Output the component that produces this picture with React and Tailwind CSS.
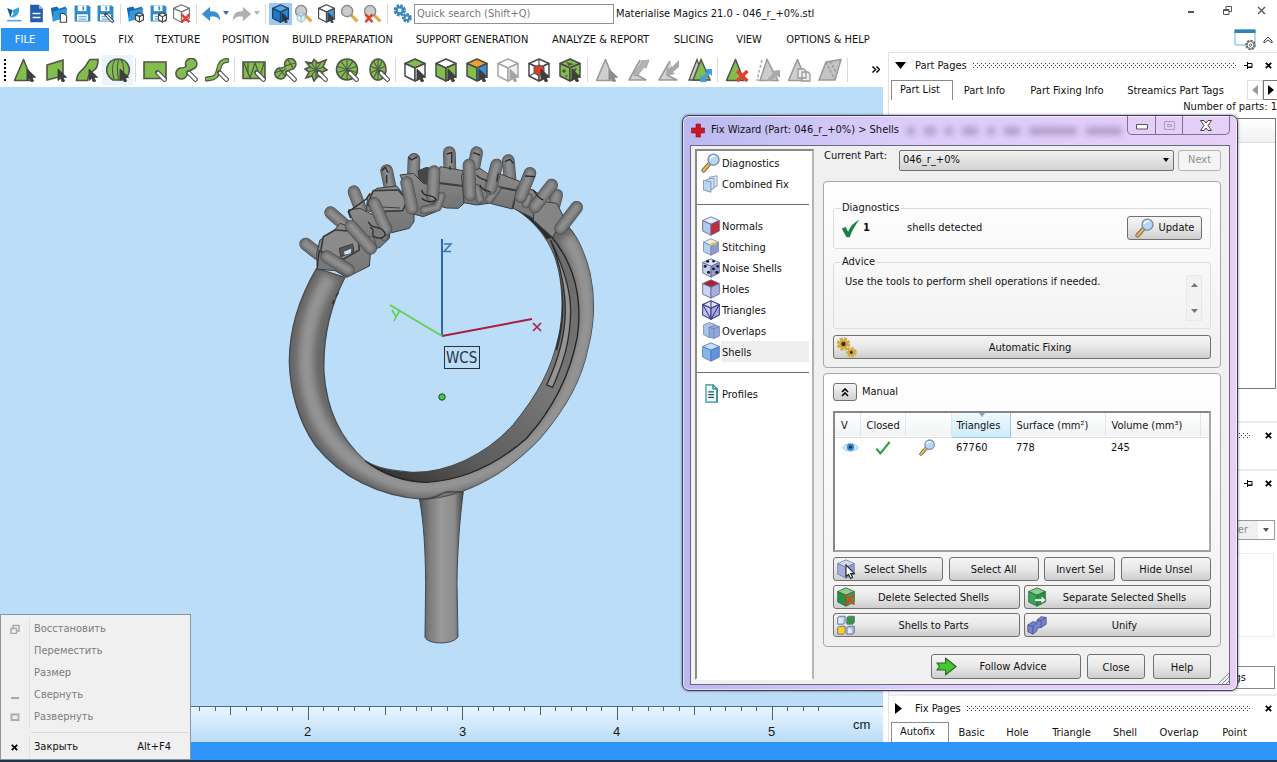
import React from "react";

/* ---------- shared icon pieces ---------- */

const Svg = ({ size = 24, children, className = "" }) => (
  <svg viewBox="0 0 24 24" width={size} height={size} className={className} fill="none" aria-hidden="true">
    {children}
  </svg>
);

const CubeFaces = ({ top, left, right, stroke = "#4a4a4a", w = 1.5 }) => (
  <g stroke={stroke} strokeWidth={w} strokeLinejoin="round">
    <path d="M12 1 22 5.5 12 10 2 5.5Z" fill={top} />
    <path d="M2 5.5 12 10V23L2 18Z" fill={left} />
    <path d="M12 10 22 5.5V18L12 23Z" fill={right} />
  </g>
);

const Cursor = ({ fill = "#3f3f3f" }) => (
  <path d="M14 11V22.5L16.6 20.2 18.4 24 20.6 23 18.8 19.3H22.6Z" fill={fill} stroke={fill} strokeWidth="1" />
);

const Pen = () => (
  <g strokeLinecap="round">
    <path d="M14.5 14.5 21.5 21.5" stroke="#4a4a4a" strokeWidth="4.6" />
    <path d="M15 15 21.5 21.5" stroke="#fff" strokeWidth="2.6" />
  </g>
);

const G = "#82bd4e";
const D = "#505548";

const Lens = ({ x = 9, y = 9, glass = "#c9cdd0", handle = "#e0a84a" }) => (
  <g>
    <path d={`M${x + 4} ${y + 4} ${x + 13} ${y + 13}`} stroke={handle} strokeWidth="4" />
    <circle cx={x} cy={y} r="7" fill={glass} stroke="#8b8b8b" strokeWidth="1.8" />
  </g>
);

const BlueLens = ({ size = 20 }) => (
  <Svg size={size}>
    <path d="M11 12 3 21" stroke="#7d6430" strokeWidth="5" strokeLinecap="round" />
    <path d="M11 12 3 21" stroke="#e0b968" strokeWidth="3" strokeLinecap="round" />
    <circle cx="15" cy="8" r="6.6" fill="#b5d9f5" stroke="#7f93ad" strokeWidth="1.8" />
    <path d="M11 7a4.5 4.5 0 0 1 6-3" stroke="#fff" strokeWidth="2" />
  </Svg>
);

const Tri = ({ fill = G, stroke = D }) => (
  <path d="M10.5 1.5 19 22.5H1.5Z" fill={fill} stroke={stroke} strokeWidth="1.6" strokeLinejoin="round" />
);

const spokes = [0, 36, 72, 108, 144, 180, 216, 252, 288, 324];
const Spokes = ({ rx, ry }) =>
  spokes.map((a) => (
    <path
      key={a}
      d={`M12 11.5 ${12 + rx * Math.sin((a * Math.PI) / 180)} ${11.5 - ry * Math.cos((a * Math.PI) / 180)}`}
      stroke={D}
      strokeWidth="1.1"
    />
  ));

const markIcons = [
  ["Mark triangle", <><Tri /><Cursor /></>],
  ["Mark plane", <><path d="M3 7 19 2V18L3 22Z" fill={G} stroke={D} strokeWidth="1.6" /><Cursor /></>],
  ["Mark surface", <><path d="M15 1.500H23C23 11 20 11 17 14 14 17 13 18 12.500 22.500H1.500C2 15 5 14 8 11 12 8 12 4 15 1.500Z" fill={G} stroke={D} strokeWidth="1.6" /><Cursor /></>],
  ["Mark shell", <><path d="M7 22C2 19 0 14 1 9 3 3 8 1 12 1S21 3 23 9C24 14 22 19 17 22Z" fill={G} stroke={D} strokeWidth="1.6" /><path d="M8 21C6 14 6 6 9 2M12.500 21C11 14 11 8 12.500 2M16 21C18 14 18 6 15 2" stroke={D} strokeWidth="1.1" /><Cursor /></>, true],
  null,
  ["Rectangle mark", <><path d="M1 4H23V20.500H1Z" fill={G} stroke={D} strokeWidth="1.6" /><Pen /></>],
  ["Brush mark", <><path d="M12 8A5.600 5.600 0 1 1 21 10C17 12 14 13 12.500 18A5.600 5.600 0 1 1 6 10C9 10 11 10 12 8Z" fill={G} stroke={D} strokeWidth="1.6" /><Pen /></>],
  ["Path mark", <><path d="M22 2.500C12 3 15 14 11 18 8 21 6 20 2 21" stroke={D} strokeWidth="5" strokeLinecap="round" /><path d="M22 2.500C12 3 15 14 11 18 8 21 6 20 2 21" stroke={G} strokeWidth="2.600" strokeLinecap="round" /><Pen /></>],
  null,
  ["Window triangles", <><path d="M1 4H23V20.500H1Z" fill={G} stroke={D} strokeWidth="1.6" /><path d="M2 5 8 20 13 5 18 18 22 5M6 4V16" stroke={D} strokeWidth="1.2" /><Pen /></>],
  ["Brush triangles", <><path d="M12 8A5.600 5.600 0 1 1 20 11C16 12 14 13 12.500 18A5.600 5.600 0 1 1 6 10C9 10 11 10 12 8Z" fill={G} stroke={D} strokeWidth="1.6" /><path d="M15 2 20 10M12 8 22 5M6 10 12 18M1 15 10 12M4 20 13 10" stroke={D} strokeWidth="1.1" /><Pen /></>],
  ["Star triangles", <><path d="M2 4 8 5 10 1.500 14 5 22 2 19 9 23 12 18 14 21 21 14 18 10 23 8 18 2 20 5 14 1 11 6 9Z" fill={G} stroke={D} strokeWidth="1.6" /><Spokes rx={8} ry={8} /><Pen /></>],
  ["Circle triangles", <><circle cx="12" cy="11.500" r="10.500" fill={G} stroke={D} strokeWidth="1.6" /><Spokes rx={10} ry={10} /><Pen /></>],
  ["Ellipse triangles", <><ellipse cx="12" cy="11.500" rx="8" ry="10.500" fill={G} stroke={D} strokeWidth="1.6" /><Spokes rx={7} ry={10} /><Pen /></>],
  null,
  ["Cube top", <><CubeFaces top={G} left="#fff" right="#fff" /><Cursor /></>],
  ["Cube sides", <><CubeFaces top="#fff" left={G} right={G} /><Cursor /></>],
  ["Cube colours", <><CubeFaces top="#f0a030" left={G} right="#3d8fd6" /><Cursor /></>],
  ["Cube clear", <><CubeFaces top="#fff" left="#fff" right="#f0f0f0" stroke="#a5a5a5" /><Cursor fill="#a5a5a5" /></>],
  ["Cube inner", <><CubeFaces top="#fff" left="#fff" right="#fff" /><path d="M2 18 12 13 22 18M12 1V13" stroke={D} strokeWidth="1.2" /><path d="M7 9 12 7 17 9V15L12 18 7 15Z" fill="#d8402c" stroke={D} /><Cursor /></>],
  ["Cube holes", <><CubeFaces top={G} left={G} right={G} /><path d="M8 4 16 6 11 8ZM15 11 19 10 17 14Z" fill={D} /><circle cx="6" cy="13" r="1.800" fill={D} /><circle cx="8.500" cy="18" r="1" fill={D} /><Cursor /></>],
  null,
  ["Grow selection", <><Tri fill="#cfcfcf" stroke="#9a9a9a" /><Cursor fill="#8c8c8c" /></>],
  ["Shrink selection", <><path d="M14 2 3 22H20L11 17 15 9" fill="#d2d2d2" stroke="#9a9a9a" strokeWidth="1.600" strokeLinejoin="round" /><path d="M23 2 15 3 15 6 9 14 8 18 12 17 18 9 20 10Z" fill="#b5b5b5" stroke="#999" strokeWidth=".8" /></>],
  ["Invert selection", <><path d="M13 3 2 22H20L10 17 15 9" fill="#d2d2d2" stroke="#9a9a9a" strokeWidth="1.600" strokeLinejoin="round" /><path d="M9 18 10 9 13 11 22 2V9L16 14 18 16Z" fill="#a8a8a8" /></>],
  ["Toggle visibility", <><path d="M9 1.500 1 22H16Z" fill="#c8c8c8" stroke={D} strokeWidth="1.300" /><path d="M13 1.500 5 22H22Z" fill={G} stroke={D} strokeWidth="1.500" /><path d="M17 11H24V18L22 16 17 21 19 24H12V17L14 19 19 14Z" fill="#439ee0" /></>],
  null,
  ["Delete marked", <><Tri /><path d="M12 13 22.500 23M22.500 13 12 23" stroke="#df4030" strokeWidth="3.400" /></>],
  ["Hide marked", <><path d="M6 2 1 22H14" stroke="#aaa" strokeWidth="1.500" strokeDasharray="3 2" /><path d="M11 1.500 4 22.500H22Z" fill="#ccc" stroke="#999" strokeWidth="1.500" /><path d="M10 23 17 15 15 13 24 12V20L21 18 15 23Z" fill="#aaa" /></>],
  ["Copy marked", <><Tri fill="#cfcfcf" stroke="#9a9a9a" /><path d="M11 11H17L19 13V20H11ZM15 14H21L23 16V23H15Z" fill="#eee" stroke="#999" strokeWidth="1.300" /></>],
  ["Separate marked", <><path d="M8 4 23 1.500 17 22H1Z" fill="#c4c4c4" stroke="#999" strokeWidth="1.500" /><path d="M8 4 17 22M12 3 19 16" stroke="#999" strokeWidth="1.400" strokeDasharray="3 1.500" /></>],
  null,
];

const Folder = ({ children }) => (
  <Svg size={19}>
    <path d="M1 5 9 3 11 6 20 3 21 13 4 22Z" fill="#1c6aa8" />
    <path d="M5 9 22 5 19 18 3 22Z" fill="#3198e2" />
    {children}
  </Svg>
);
const Disk = ({ children }) => (
  <Svg size={19}>
    <path d="M2 2H20L22 4V22H2Z" fill="#2b8bcb" />
    <path d="M6 2H17V9H6Z" fill="#fff" />
    <path d="M13 3V8" stroke="#2b8bcb" strokeWidth="2" />
    <path d="M5 13H19V21H5Z" fill="#fff" />
    <path d="M7 16H17M7 19H17" stroke="#7ab1d8" strokeWidth="1.500" />
    {children}
  </Svg>
);
const MiniCube = () => (
  <path d="M17 11 22 13.500V20L17 23 12 20V13.500ZM12 13.500 17 16 22 13.500M17 16V23" fill="#fff" stroke="#444" strokeWidth="1.400" />
);

const quickIcons = [
  ["Materialise", <Svg size={19}><path d="M4 5 11 8 8 17Z" fill="#1c5a91" /><path d="M11 8 19 4C20 13 15 17 8 17L12 13Z" fill="#32a5d7" /><path d="M4 21H22" stroke="#42aedb" strokeWidth="2" /></Svg>],
  ["New", <Svg size={19}><path d="M4 1H15L20 6V23H4Z" fill="#1e5fae" /><path d="M15 1V6H20" fill="#93bdea" /><path d="M7 12H17M7 17H17" stroke="#fff" strokeWidth="1.700" /></Svg>],
  ["Open", <Folder><path d="M13 12H18L21 15V23H13Z" fill="#fff" stroke="#444" strokeWidth="1.400" /></Folder>],
  ["Save", <Disk />],
  ["Save as", <Disk><path d="M11 12 22 23" stroke="#444" strokeWidth="4" /><path d="M13 14 21 22" stroke="#fff" strokeWidth="1.700" /></Disk>],
  null,
  ["Load project", <Folder><MiniCube /></Folder>],
  ["Save project", <Disk><MiniCube /></Disk>],
  ["Unload", <Svg size={19}><CubeFaces top="#fff" left="#fff" right="#fff" stroke="#777" /><path d="M12 13 22 23M22 13 12 23" stroke="#e04038" strokeWidth="3.200" /></Svg>],
  null,
];
const viewIcons = [
  ["Select part", <Svg size={19}><CubeFaces top="#50a5e9" left="#2376c4" right="#2b84d4" stroke="#24415e" /><Cursor fill="#273748" /></Svg>, true],
  ["Zoom part", <Svg size={19}><Lens /><path d="M4 13 9 11 14 13V20L9 23 4 20ZM4 13 9 16 14 13M9 16V23" fill="#dff0fb" stroke="#7db4d6" /></Svg>],
  ["Select face", <Svg size={19}><CubeFaces top="#fff" left="#fff" right="#3d9be6" /><Cursor /></Svg>],
  ["Zoom", <Svg size={19}><Lens /></Svg>],
  ["Unzoom", <Svg size={19}><Lens /><path d="M3 13 12 23M12 13 3 23" stroke="#d9432f" strokeWidth="3.200" /></Svg>],
  null,
];

const Gears = ({ size = 19, color = "#3987bd", hub = "#fff" }) => (
  <Svg size={size}>
    <circle cx="8.500" cy="8" r="5.500" stroke={color} strokeWidth="4.500" strokeDasharray="3 1.300" />
    <circle cx="8.500" cy="8" r="4" stroke={color} strokeWidth="3" fill={hub} />
    <circle cx="17.500" cy="17.500" r="4.200" stroke={color} strokeWidth="4" strokeDasharray="2.600 1.200" />
    <circle cx="17.500" cy="17.500" r="3" stroke={color} strokeWidth="2.400" fill={hub} />
  </Svg>
);

const Divider = () => <span className="mx-[3px] h-5 w-px shrink-0 bg-[#d9d9d9]" />;
const Caret = ({ color }) => (
  <svg width="8" height="5" viewBox="0 0 8 5" aria-hidden="true"><path d="M1 0H7L4 4Z" fill={color} /></svg>
);

function QuickRow({ items }) {
  return items.map((it, i) =>
    it ? (
      <button key={i} aria-label={it[0]} className={it[2] ? "flex h-[22px] w-[23px] items-center justify-center bg-[#9ccaf2]" : "flex h-[22px] w-[23px] items-center justify-center"}>
        {it[1]}
      </button>
    ) : (
      <Divider key={i} />
    )
  );
}

function TitleBar() {
  return (
    <header className="flex h-[26px] shrink-0 items-center pl-[2px] pt-px">
      <QuickRow items={quickIcons} />
      <button aria-label="Undo" className="flex w-[31px] items-center">
        <Svg size={22}><path d="M2 12 11 4V9C19 8 22 13 22 19 19 15 17 14 11 15V20Z" fill="#3a8fcf" /></Svg>
        <Caret color="#3a6fa0" />
      </button>
      <button aria-label="Redo" className="flex w-[31px] items-center">
        <Svg size={22}><path d="M22 12 13 4V9C5 8 2 13 2 19 5 15 7 14 13 15V20Z" fill="#b0b0b0" /></Svg>
        <Caret color="#a8b6c2" />
      </button>
      <Divider />
      <QuickRow items={viewIcons} />
      <span className="flex w-[23px] justify-center"><Gears /></span>
      <input aria-label="Quick search" placeholder="Quick search (Shift+Q)" className="h-5 w-[200px] border border-[#909090] bg-white px-[2px] text-[11px] placeholder:text-[#777]" />
      <h1 className="ml-[2px] whitespace-nowrap text-[11px]">Materialise Magics 21.0 - 046_r_+0%.stl</h1>
      <div className="ml-auto flex items-center self-start pt-px">
        <button aria-label="Minimize" className="flex h-4 w-9 items-center justify-center"><svg width="8" height="8" viewBox="0 0 8 8"><path d="M1 6H7" stroke="#555" strokeWidth="2" /></svg></button>
        <button aria-label="Restore" className="flex h-4 w-9 items-center justify-center"><svg width="9" height="9" viewBox="0 0 9 9" fill="none" stroke="#555"><path d="M.5 3.500H6V8.500H.5ZM.5 4.500H6M3 3V.5H8.500V5.500H6" /></svg></button>
        <button aria-label="Close window" className="flex h-4 w-8 items-center justify-center"><svg width="9" height="9" viewBox="0 0 9 9"><path d="M1 1 8 8M8 1 1 8" stroke="#555" strokeWidth="1.300" /></svg></button>
      </div>
    </header>
  );
}

const menu = [
  ["TOOLS", "w-[55px]"],
  ["FIX", "w-[38px]"],
  ["TEXTURE", "w-[65px]"],
  ["POSITION", "w-[71px]"],
  ["BUILD PREPARATION", "w-[123px]"],
  ["SUPPORT GENERATION", "w-[136px]"],
  ["ANALYZE & REPORT", "w-[121px]"],
  ["SLICING", "w-[65px]"],
  ["VIEW", "w-[46px]"],
  ["OPTIONS & HELP", "w-[112px]"],
];

function MenuBar() {
  return (
    <nav className="flex h-[26px] shrink-0 items-center pl-px pt-px">
      <button className="mr-[3px] h-[23px] w-12 bg-[#2d93f0] text-white">FILE</button>
      {menu.map(([t, w]) => (
        <button key={t} className={`${w} h-[23px] whitespace-nowrap text-center`}>{t}</button>
      ))}
      <div className="ml-auto flex items-center gap-[6px] pr-1">
        <svg width="23" height="22" viewBox="0 0 23 22" fill="none" aria-hidden="true">
          <path d="M1 1H21V16H1Z" fill="#fff" stroke="#6fb4d4" />
          <path d="M.5 .5H21.500V4H.5Z" fill="#2f83b5" />
          <circle cx="16.500" cy="16" r="4.500" fill="#fff" stroke="#666" strokeWidth="1.500" strokeDasharray="2.400 1" />
          <circle cx="16.500" cy="16" r="3.500" fill="#fff" stroke="#666" />
          <circle cx="16.500" cy="16" r="1.200" stroke="#666" />
        </svg>
        <svg width="10" height="8" viewBox="0 0 10 8" fill="none" aria-hidden="true"><path d="M1 5 5 1 9 5V7L5 4 1 7Z" stroke="#444" /></svg>
      </div>
    </nav>
  );
}

function ToolBar() {
  return (
    <div className="flex h-[35px] shrink-0 items-center overflow-hidden pl-1">
      <svg width="5" height="24" viewBox="0 0 5 24" aria-hidden="true"><path d="M1 1V24" stroke="#000" strokeWidth="2" strokeDasharray="2 2" /></svg>
      {markIcons.map((it, i) =>
        it ? (
          <button key={i} aria-label={it[0]} className={it[2] ? "flex h-[30px] w-[31px] shrink-0 items-center justify-center bg-[#eaf4fc]" : "flex h-[30px] w-[31px] shrink-0 items-center justify-center"}>
            <Svg size={24}>{it[1]}</Svg>
          </button>
        ) : (
          <span key={i} className="ml-[2px] mr-[3px] h-6 w-px shrink-0 bg-[#d9d9d9]" />
        )
      )}
      <button aria-label="More tools" className="ml-auto pr-[3px]">
        <svg width="8" height="7" viewBox="0 0 8 7" fill="none" stroke="#000" strokeWidth="1.500" aria-hidden="true"><path d="M.5 .5 3.500 3.500 .5 6.500M4.500 .5 7.500 3.500 4.500 6.500" /></svg>
      </button>
    </div>
  );
}

/* ---------- 3D view ---------- */

const prongs = [
  "M320 92 332 150", "M402 58 400 120", "M508 38 510 95", "M590 38 580 90", "M685 62 690 115",
  "M222 155 242 208", "M152 218 200 260", "M77 312 115 342",
  "M830 165 822 195",
];
const frontProngs = [
  "M283 190 318 268", "M380 128 396 205", "M462 95 458 172", "M567 75 570 165", "M650 75 632 145",
  "M750 100 722 170", "M815 135 765 200", "M213 258 272 325", "M140 350 205 390", "M890 202 842 265",
];
const smallProngs = ["M590 145 600 178", "M484 168 472 202 432 210", "M650 148 628 178", "M746 172 738 192", "M322 260 312 290", "M272 300 278 322"];
const Prong = ({ d, small }) => (
  <g fill="none" strokeLinecap="round" strokeLinejoin="round">
    <path d={d} stroke="#4c4e51" strokeWidth={small ? 26 : 38} />
    <path d={d} stroke="#6e6e6e" strokeWidth={small ? 22 : 34} />
    <path d={d} stroke="#7e7e7e" strokeWidth={small ? 15 : 25} />
    <path d={d} stroke="#8d8d8d" strokeWidth={small ? 7 : 13} />
  </g>
);

function RingView() {
  const body =
    "M110 385C60 470 28 570 28 665 30 760 60 850 105 915 180 1010 300 1070 425 1077 560 1075 690 990 780 895 860 800 905 720 925 620 945 540 945 470 930 400 915 340 895 290 860 255L790 225 705 205C760 240 805 290 828 360 850 430 852 520 836 590 815 690 770 770 700 855 620 945 500 1000 395 997 330 992 290 985 255 962 185 900 140 810 132 700 128 600 150 500 195 412Z";
  return (
    <svg viewBox="0 87 883 619" className="min-h-0 w-full flex-1 bg-[#bbddf8]" preserveAspectRatio="xMinYMin slice" role="img" aria-label="Ring model with coordinate system">
      <defs>
        <linearGradient id="stem" x1="418" x2="550" y1="0" y2="0" gradientUnits="userSpaceOnUse">
          <stop offset="0" stopColor="#505050" /><stop offset=".25" stopColor="#7f7f7f" /><stop offset=".5" stopColor="#999" /><stop offset=".8" stopColor="#8b8b8b" /><stop offset="1" stopColor="#454545" />
        </linearGradient>
        <linearGradient id="wall" x1="260" x2="890" y1="980" y2="400" gradientUnits="userSpaceOnUse">
          <stop offset="0" stopColor="#2f2f2f" /><stop offset=".3" stopColor="#5c5c5c" /><stop offset=".65" stopColor="#777" /><stop offset="1" stopColor="#6c6c6c" />
        </linearGradient>
        <linearGradient id="block" x1="0" x2="0" y1="0" y2="1">
          <stop offset="0" stopColor="#8a8a8a" /><stop offset="1" stopColor="#747474" />
        </linearGradient>
        <filter id="soft" x="-10%" y="-10%" width="120%" height="120%"><feGaussianBlur stdDeviation="11" /></filter>
        <clipPath id="ring"><path d={body} /></clipPath>
      </defs>
      <g transform="translate(280 140) scale(.3333)">
        <path d="M418 1075C432 1150 436 1230 437 1330L435 1492C445 1515 522 1515 534 1490L531 1330C532 1230 540 1130 550 1055Z" fill="url(#stem)" stroke="#3f4750" strokeWidth="3" />
        <path d={body} fill="#666" stroke="#444b52" strokeWidth="4" />
        <g clipPath="url(#ring)">
          <path d="M150 410C95 500 76 580 78 680 85 800 130 890 210 955 290 1015 380 1042 430 1044 570 1036 700 970 790 870 870 770 905 660 920 550 925 440 905 360 860 290" fill="none" stroke="#949494" strokeWidth="46" filter="url(#soft)" />
          <path d="M255 962C310 1005 370 1025 440 1027 560 1020 660 965 740 895 820 805 870 710 892 590 908 480 885 370 810 285L705 205C760 240 805 290 828 360 850 430 852 520 836 590 815 690 770 770 700 855 620 945 500 1000 395 997 330 992 290 985 255 962Z" fill="url(#wall)" />
          <path d="M255 962C310 1005 370 1025 440 1027 560 1020 660 965 740 895 820 805 870 710 892 590 908 480 885 370 810 285" fill="none" stroke="#242424" strokeWidth="4" />
          <path d="M812 300C845 370 872 440 872 510 872 600 850 670 818 742L800 735C835 660 856 590 856 510 856 430 835 360 812 300Z" fill="#949494" stroke="#2c2c2c" strokeWidth="4" />
          <path d="M700 200C770 250 815 320 832 390 856 480 848 560 828 630" fill="none" stroke="#303030" strokeWidth="8" />
        </g>
        <path d="M705 205 800 245 822 292 800 298C780 265 745 232 705 205Z" fill="#2c2c2c" />
        <path d="M418 1077C460 1082 480 1060 500 1056L550 1055" fill="none" stroke="#444" strokeWidth="4" />
        <path d="M167 470 175 458M158 492 162 480" stroke="#333" strokeWidth="5" />

        {prongs.map((d) => <Prong key={d} d={d} />)}
        <g stroke="#3a3c3e" strokeWidth="3" strokeLinejoin="round" fill="url(#block)">
          <path d="M415 92 440 82 480 95 500 120 480 140 420 135Z" fill="#464646" />
          <path d="M360 105 400 100 430 130 470 140 468 215 430 230 400 222 395 180Z" />
          <path d="M480 80 550 92 545 112 550 135 552 190 535 205 500 204 470 196 472 130Z" />
          <path d="M470 128 548 138" fill="none" strokeWidth="6" />
          <path d="M545 105 600 85 650 120 645 175 625 190 590 195 552 188Z" />
          <path d="M655 100 735 130 712 150 697 207 630 190 645 150Z" />
          <path d="M650 140 712 152 697 207" fill="none" strokeWidth="6" />
          <path d="M712 140 760 150 800 180 765 238 700 205Z" />
          <path d="M765 180 830 190 852 232 818 292 760 240Z" fill="#858585" />
          <path d="M262 172 290 145 350 138 385 180 402 205V245L388 265 335 278 300 220 260 212Z" />
          <path d="M280 152 355 150 382 182 368 212 300 215 262 195Z" fill="#8b8b8b" strokeWidth="5" />
          <path d="M285 200 360 204" fill="none" />
          <path d="M205 210 240 205 300 235 330 262 328 295 300 322 270 332 240 290Z" />
          <path d="M120 300 160 275 180 250 235 270 272 330 268 378 200 412 165 392 112 388 110 340Z" />
          <path d="M130 290 165 270 232 275 238 330 190 358 122 335Z" fill="#8b8b8b" strokeWidth="5" />
          <path d="M178 325 218 312 222 335 182 350Z" fill="#555" />
          <path d="M192 335 214 326 212 340 194 344Z" fill="#c9e4f8" stroke="none" />
        </g>
        {smallProngs.map((d) => <Prong key={d} d={d} small />)}
        {frontProngs.map((d) => <Prong key={d} d={d} />)}
        <g fill="none" stroke="#2b2b2b" strokeWidth="4">
          <path d="M265 245C275 270 300 255 312 275 325 290 300 300 282 290 270 280 290 270 270 262" fill="#7c7c7c" />
          <path d="M425 150C430 175 455 160 468 178 460 190 435 185 425 175" />
          <path d="M590 105C600 120 615 115 622 125M600 135C605 155 630 150 632 158M760 150C770 165 775 175 790 180" />
          <path d="M305 92 315 82 325 98M385 52 395 60 412 50M500 42 515 38V70M580 38 600 45M675 65 690 58 700 70M320 105V130M510 78V90" />
          <path d="M270 160 258 178 205 215 212 235M655 100 650 125M735 108 765 110M118 330 112 380" />
        </g>
      </g>
      <g fill="none" strokeWidth="2">
        <path d="M442 336V239" stroke="#2c68a8" />
        <path d="M442 336 532 319" stroke="#a61e3c" />
        <path d="M442 336 390 305" stroke="#64d050" />
        <path d="M444 244H451L444 251.500H451" stroke="#3b74ae" strokeWidth="1.500" />
        <path d="M533 323 541 331M541 323 533 331" stroke="#a61e3c" strokeWidth="1.600" />
        <path d="M392 310 396 317 400 310M396 317 394 321" stroke="#64d050" strokeWidth="1.600" />
      </g>
      <rect x="444.500" y="346.500" width="35" height="22" fill="none" stroke="#26333f" />
      <text x="446" y="363" fontSize="15" fill="#26333f">WCS</text>
      <circle cx="442" cy="397" r="3.200" fill="#4cc44c" stroke="#1d4a2a" />
    </svg>
  );
}

function Ruler() {
  const ticks = Array.from({ length: 49 }, (_, i) => i);
  return (
    <svg viewBox="0 0 883 36" className="h-9 w-full shrink-0 border-t border-[#4c6a86] bg-linear-to-b from-[#eaf5fe] to-[#b9dcf7] font-['Liberation_Sans',sans-serif]" preserveAspectRatio="xMinYMin slice" role="img" aria-label="Ruler in centimetres">
      {ticks.map((i) => {
        const x = Math.round(75.5 + i * 15.47);
        const h = i % 10 === 5 ? 13 : i % 10 === 0 ? 8 : 4;
        return <path key={i} d={`M${x + 0.5} 0V${h}`} stroke="#48617a" />;
      })}
      {[["2", 304], ["3", 459], ["4", 613], ["5", 768]].map(([t, x]) => (
        <text key={t} x={x} y="29" fontSize="13" fill="#10181f">{t}</text>
      ))}
      <text x="853" y="22" fontSize="13" fill="#10181f">cm</text>
    </svg>
  );
}

/* ---------- right-hand panels ---------- */

const Dots = () => (
  <svg className="h-[5px] min-w-0 flex-1" aria-hidden="true">
    <defs>
      <pattern id="dither" width="4" height="4" patternUnits="userSpaceOnUse">
        <rect width="1" height="1" fill="#333" /><rect x="2" y="2" width="1" height="1" fill="#333" />
      </pattern>
    </defs>
    <rect width="100%" height="5" fill="url(#dither)" />
  </svg>
);
const PinIcon = () => (
  <svg width="9" height="7" viewBox="0 0 9 7" fill="none" stroke="#000" aria-hidden="true"><path d="M0 3.500H3M3.500 0V7M4 1.500H8V5.500H4M4 5H8" /></svg>
);
const CloseX = () => (
  <svg width="7" height="7" viewBox="0 0 7 7" aria-hidden="true"><path d="M.8 .8 6.200 6.200M6.200 .8 .8 6.200" stroke="#000" strokeWidth="1.800" /></svg>
);

function PanelHeader({ title, open, pin }) {
  return (
    <div className="flex h-6 shrink-0 items-center pl-[6px] pr-[5px]">
      {title && (
        <button aria-label={`Toggle ${title}`} className="w-5">
          {open ? <svg width="11" height="7" viewBox="0 0 11 7"><path d="M0 0H11L5.500 7Z" /></svg> : <svg width="7" height="11" viewBox="0 0 7 11"><path d="M0 0 7 5.500 0 11Z" /></svg>}
        </button>
      )}
      {title && <h2 className="mr-[6px] whitespace-nowrap pt-px">{title}</h2>}
      <Dots />
      {pin && <button aria-label="Pin panel" className="ml-[7px]"><PinIcon /></button>}
      <button aria-label="Close panel" className={pin ? "ml-3" : "ml-[14px]"}><CloseX /></button>
    </div>
  );
}

function Tabs({ items }) {
  return (
    <div role="tablist" className="flex h-5 shrink-0 items-stretch pl-[2px]">
      {items.map(([t, w], i) => (
        <button key={t} role="tab" aria-selected={i === 0} className={`${w} whitespace-nowrap ${i === 0 ? "border border-b-0 border-[#8a8a8a] pb-px pl-2 text-left" : "pt-px text-center"}`}>
          {t}
        </button>
      ))}
    </div>
  );
}

function SidePanels() {
  return (
    <aside className="ml-[5px] flex w-[389px] shrink-0 flex-col border-l border-t border-[#e3e3e3] bg-white">
      <section className="flex h-[368px] shrink-0 flex-col">
        <PanelHeader title="Part Pages" open pin />
        <div className="mt-[3px] flex">
          <Tabs items={[["Part List", "w-[62px]"], ["Part Info", "w-[63px]"], ["Part Fixing Info", "w-[102px]"], ["Streamics Part Tags", "w-[115px]"]]} />
          <div className="ml-auto flex">
            <button aria-label="Scroll tabs left" className="flex h-5 w-4 items-center justify-center border border-[#e0e0e0]"><svg width="6" height="10" viewBox="0 0 6 10"><path d="M6 0V10L0 5Z" fill="#999" /></svg></button>
            <button aria-label="Scroll tabs right" className="flex h-5 w-[14px] items-center justify-center border border-r-0 border-[#777]"><svg width="6" height="10" viewBox="0 0 6 10"><path d="M0 0V10L6 5Z" /></svg></button>
          </div>
        </div>
        <p className="text-right leading-[14px]">Number of parts: 1</p>
        <div className="mr-px mt-1 h-[271px] border border-[#777]">
          <div className="h-6 border-b border-[#dcdcdc] bg-linear-to-b from-white to-[#f0f1f2]" />
        </div>
      </section>
      <section className="h-12 shrink-0 border-t-2 border-[#ececec]"><PanelHeader /></section>
      <section className="flex min-h-[225px] flex-1 flex-col border-t-2 border-[#ececec]">
        <PanelHeader pin />
        <div className="ml-auto mr-[2px] mt-[25px] flex h-5 w-[60px] items-center justify-end border border-[#999] bg-[#f0f0f0] text-[#888]">
          <span className="pr-[10px]">er</span>
          <button aria-label="Open filter list" className="flex h-full w-4 items-center justify-center bg-white"><Caret color="#555" /></button>
        </div>
        <div className="mr-[3px] mt-[13px] h-[84px] border border-[#ececec]" />
        <button className="ml-auto mr-[2px] mt-[29px] h-[23px] w-[100px] border border-[#888] pr-7 text-right">gs</button>
      </section>
      <section className="h-12 shrink-0 border-t-2 border-[#ececec]">
        <PanelHeader title="Fix Pages" />
        <div className="mt-[2px]"><Tabs items={[["Autofix", "w-[58px]"], ["Basic", "w-[45px]"], ["Hole", "w-[47px]"], ["Triangle", "w-[61px]"], ["Shell", "w-[46px]"], ["Overlap", "w-[62px]"], ["Point", "w-[49px]"]]} /></div>
      </section>
    </aside>
  );
}

/* ---------- fix wizard ---------- */

const S = "#7280a8";
const wizardItems = [
  ["Diagnostics", <BlueLens />],
  ["Combined Fix", <Svg size={18}><path d="M10 3 20 1V15L10 18Z" fill="#dbeaf9" stroke={S} /><path d="M6 6 16 4V18L6 21Z" fill="#cfe2f7" stroke={S} /><path d="M2 7 12 9V23L2 20Z" fill="#b9d4f1" stroke={S} /></Svg>],
  null,
  ["Normals", <Svg size={20}><CubeFaces top="#e6ecfb" left="#b5c6ea" right="#c22c35" stroke="#5b6590" w={1} /></Svg>],
  ["Stitching", <Svg size={18}><CubeFaces top="#e6ecfb" left="#b5d0ee" right="#8f97d4" stroke={S} w={1} /><path d="M11 10 14 7 17 8 20 4" stroke="#e8c73c" strokeWidth="2.500" /></Svg>],
  ["Noise Shells", <Svg size={20}><CubeFaces top="#dde6fa" left="#c3d2ef" right="#939ccf" stroke="#5b6590" w={1} /><g fill="#1b1b2a"><circle cx="8" cy="4" r="1.800" /><circle cx="15" cy="4" r="1.500" /><circle cx="5" cy="10" r="1.800" /><circle cx="9" cy="17" r="1.800" /><circle cx="15" cy="13" r="1.800" /><circle cx="20" cy="10" r="1.600" /><circle cx="19" cy="17" r="1.800" /></g></Svg>],
  ["Holes", <Svg size={20}><CubeFaces top="#b3202c" left="#c8d5f4" right="#a9aee0" stroke="#5b6590" w={1} /></Svg>],
  ["Triangles", <Svg size={20}><CubeFaces top="#dfe0fb" left="#c5c7f2" right="#a8abe4" stroke="#3e3f84" w={1.3} /><path d="M2 5.500 12 23 22 5.500M12 1V10" stroke="#3e3f84" strokeWidth="1.300" /></Svg>],
  ["Overlaps", <Svg size={19}><path d="M2 5 9 2 16 4V17L9 21 2 17Z" fill="#aac4ec" stroke={S} /><path d="M9 8 16 5 22 7V19L15 22 9 20Z" fill="#8fa7de" stroke={S} /><path d="M9 8 15 10 22 7M15 10V22" stroke={S} /></Svg>],
  ["Shells", <Svg size={20}><CubeFaces top="#c3e0fa" left="#86b6ea" right="#5d94da" stroke="#5177b4" w={1} /></Svg>],
  null,
  ["Profiles", <Svg size={19}><path d="M5 1H14L19 6V23H5Z" fill="#e8fbfb" stroke="#358e98" strokeWidth="1.500" /><path d="M14 1V6H19V23" stroke="#358e98" strokeWidth="2" /><path d="M8 10H15M8 13.500H15M8 17H15" stroke="#354a55" strokeWidth="1.500" /></Svg>],
];

const btn = "relative flex items-center justify-center whitespace-nowrap rounded-[3px] border border-[#707070] bg-linear-to-b from-[#f5f5f5] via-[#e8e8e8] to-[#cdcdcd]";

function Btn({ icon, size, pad = "", children }) {
  return (
    <button className={`${btn} ${size}`}>
      {icon && <span className="absolute left-[2px] top-px">{icon}</span>}
      <span className={`pt-[2px] ${pad}`}>{children}</span>
    </button>
  );
}

const smudges = ["w-2", "w-3", "w-2", "w-4", "w-2", "w-4", "w-12", "w-9"];

function WizardTitle() {
  return (
    <div className="flex h-[29px] shrink-0 items-start">
      <h2 className="flex items-center gap-[6px] whitespace-nowrap pl-px pt-[5px]">
        <svg width="14" height="18" viewBox="0 0 14 18" aria-hidden="true"><path d="M5 3H9.500V7H13.500V12H9.500V16H5V12H.5V7H5Z" fill="#c91823" stroke="#8d1018" strokeWidth=".6" /></svg>
        Fix Wizard (Part: 046_r_+0%) &gt; Shells
      </h2>
      <div className="ml-1 flex flex-1 items-center justify-around self-center blur-[3px]" aria-hidden="true">
        {smudges.map((w, i) => <span key={i} className={`${w} h-2 bg-[#8f7aa8]/60`} />)}
      </div>
      <div className="flex h-[19px] rounded-b-[5px] border border-t-0 border-[#7d6f93]">
        <button aria-label="Minimize wizard" className="flex w-7 items-center justify-center border-r border-[#7d6f93] pt-1"><svg width="12" height="6" viewBox="0 0 12 6"><path d="M.5 .5H11.500V5H.5Z" fill="#fff" stroke="#555" /></svg></button>
        <button aria-label="Maximize wizard" disabled className="flex w-[27px] items-center justify-center border-r border-[#7d6f93]"><svg width="11" height="9" viewBox="0 0 11 9" fill="none" stroke="#a9a0b4"><path d="M.5 .5H10.500V8.500H.5ZM3.500 3.500H7.500V5.500H3.500Z" /></svg></button>
        <button aria-label="Close wizard" className="flex w-[46px] items-center justify-center"><svg width="12" height="11" viewBox="0 0 12 11"><path d="M.5 .5H4L6 3 8 .5H11.500L8 5.500 11.500 10.500H8L6 8 4 10.500H.5L4 5.500Z" fill="#fff" stroke="#444" /></svg></button>
      </div>
    </div>
  );
}

const th = "whitespace-nowrap border-r border-[#e2e6ea] p-0 pl-[6px] pt-[3px] text-left font-normal";

function FixWizard() {
  return (
    <div role="dialog" aria-label="Fix Wizard" className="absolute left-[682px] top-[115px] flex h-[576px] w-[556px] flex-col rounded-[7px] border border-[#3f3a52] bg-linear-to-r from-[#b9b9f0] via-[#dccdfa] via-40% to-[#e6d0f8] px-[7px] pb-[5px] shadow-[0_0_2px_1px_rgba(70,60,100,0.35),inset_0_0_0_1px_rgba(255,255,255,0.6)]">
      <WizardTitle />
      <div className="relative flex min-h-0 flex-1 border border-[#6d6680] bg-[#f0f0f0] pb-1 pl-1 pr-2 pt-[3px]">
        <ul className="w-[119px] shrink-0 border-2 border-[#8a8a8a] border-b-white border-r-[#b5b5b5] bg-white pt-px">
          {wizardItems.map((it, i) =>
            it ? (
              <li key={i}>
                <button className="flex h-[21px] w-[112px] items-center pl-1 text-left">
                  <span className="flex w-5 justify-center">{it[1]}</span>
                  <span className={it[0] === "Shells" ? "flex h-full flex-1 items-center bg-[#efefef] pl-px pt-[2px]" : "pl-px pt-[2px]"}>{it[0]}</span>
                </button>
              </li>
            ) : (
              <li key={i} className="flex h-[21px] items-center"><span className="h-px w-[112px] bg-[#6f6f6f]" /></li>
            )
          )}
        </ul>

        <div className="ml-[9px] flex min-w-0 flex-1 flex-col">
          <div className="mb-[10px] flex h-[22px] items-center">
            <label htmlFor="part" className="w-[76px] self-start pl-px leading-[13px]">Current Part:</label>
            <div className="relative mr-1 flex-1">
              <select id="part" className="block h-[21px] w-full appearance-none rounded-[2px] border border-[#707070] bg-linear-to-b from-[#f2f2f2] to-[#d2d2d2] pl-[3px]">
                <option>046_r_+0%</option>
              </select>
              <span className="pointer-events-none absolute right-1 top-2"><Caret color="#000" /></span>
            </div>
            <button disabled className="h-[21px] w-[43px] rounded-[3px] border border-[#b5b5b5] bg-[#f4f4f4] text-[#8d8d8d]">Next</button>
          </div>

          <section className="mb-[5px] flex h-[187px] flex-col rounded-[4px] border border-[#a8a8a8] bg-linear-to-b from-white to-[#f0f0f0] px-[9px] pt-[19px]">
            <fieldset className="mb-[6px] h-12 rounded-[3px] border border-[#dcdcdc] pl-[7px] pr-2">
              <legend className="px-px leading-[14px]">Diagnostics</legend>
              <div className="flex items-center pt-px">
                <Svg size={19}><path d="M1 12 6 10 9 16C12 9 16 5 23 1 18 8 13 16 11 23H7Z" fill="#17803f" /></Svg>
                <b className="ml-[3px] w-[44px]">1</b>
                <span>shells detected</span>
                <button className={`${btn} ml-auto h-6 w-[75px] gap-1`}><BlueLens />Update</button>
              </div>
            </fieldset>
            <fieldset className="mb-[6px] h-[74px] rounded-[3px] border border-[#dcdcdc] pl-[11px] pr-2">
              <legend className="-ml-1 px-px leading-[14px]">Advice</legend>
              <div className="mt-[6px] flex justify-between">
                <p>Use the tools to perform shell operations if needed.</p>
                <div className="flex h-[46px] w-4 flex-col items-center justify-between border border-[#e8e8e8] bg-[#f2f2f2] py-[7px]">
                  <svg width="7" height="4" viewBox="0 0 7 4"><path d="M0 4 3.500 0 7 4Z" fill="#777" /></svg>
                  <svg width="7" height="4" viewBox="0 0 7 4"><path d="M0 0 3.500 4 7 0Z" fill="#777" /></svg>
                </div>
              </div>
            </fieldset>
            <Btn size="h-6 w-full" pad="pl-4" icon={<Gears size={21} color="#d3aa48" hub="#3c2c10" />}>Automatic Fixing</Btn>
          </section>

          <section className="flex h-[274px] flex-col rounded-[4px] border border-[#a8a8a8] bg-linear-to-b from-white to-[#f0f0f0] px-[9px] pt-[9px]">
            <div className="mb-[10px] flex items-center gap-[5px]">
              <button aria-label="Collapse manual tools" className="flex h-[18px] w-6 items-center justify-center rounded-[3px] border border-[#707070] bg-linear-to-b from-[#f5f5f5] to-[#d0d0d0]">
                <svg width="8" height="9" viewBox="0 0 8 9" fill="none" stroke="#000" strokeWidth="1.600"><path d="M1 4 4 1 7 4M1 8 4 5 7 8" /></svg>
              </button>
              <span>Manual</span>
            </div>
            <div className="mb-[5px] h-[141px] border-2 border-[#868686] border-b-[#a0a0a0] border-r-[#a8a8a8] bg-white">
              <table className="w-full table-fixed border-collapse">
                <thead>
                  <tr className="h-6 border-b border-[#dadfe4] bg-linear-to-b from-white to-[#f1f3f5]">
                    <th className={`${th} w-[25px]`}>V</th>
                    <th className={`${th} w-[45px]`}>Closed</th>
                    <th className={`${th} w-[46px]`} aria-label="Zoom" />
                    <th className="relative w-[59px] border border-t-0 border-[#93cbe4] bg-linear-to-b from-[#eef9fe] to-[#cfebf8] p-0 pl-[5px] pt-[3px] text-left font-normal">
                      <span className="absolute left-[26px] top-0 leading-none"><Caret color="#7fa8bd" /></span>
                      Triangles
                    </th>
                    <th className={`${th} w-[95px]`}>Surface (mm²)</th>
                    <th className={`${th} w-[95px]`}>Volume (mm³)</th>
                    <th className="p-0" aria-label="Spare" />
                  </tr>
                </thead>
                <tbody>
                  <tr className="h-[21px]">
                    <td className="p-0 pl-[7px]"><Svg size={17}><path d="M1 12C5 5 19 5 23 12 19 19 5 19 1 12Z" fill="#cfe6f6" stroke="#8db6d4" /><circle cx="12" cy="11.500" r="5" fill="#2c87c8" /><circle cx="12" cy="11.500" r="2" fill="#12344f" /></Svg></td>
                    <td className="p-0 pl-[15px]"><Svg size={16}><path d="M2 13 8 20 22 3" stroke="#2f9e42" strokeWidth="3.200" /></Svg></td>
                    <td className="p-0 pl-[14px]"><BlueLens size={17} /></td>
                    <td className="p-0 pl-[5px]">67760</td>
                    <td className="p-0 pl-[6px]">778</td>
                    <td className="p-0 pl-[6px]">245</td>
                    <td className="p-0" />
                  </tr>
                </tbody>
              </table>
            </div>
            <div className="flex flex-col gap-1">
              <div className="flex justify-between">
                <Btn size="h-6 w-[110px]" pad="pl-[15px]" icon={<Svg size={20}><CubeFaces top="#d5daf1" left="#a6b0dc" right="#8f9bd0" stroke={S} w={1} /><path d="M12 7V21L15 18.500 17.500 23.500 20 22 17.500 17.500H22Z" fill="#fff" stroke="#222" strokeWidth="1.300" /></Svg>}>Select Shells</Btn>
                <Btn size="h-6 w-[90px]">Select All</Btn>
                <Btn size="h-6 w-[71px]">Invert Sel</Btn>
                <Btn size="h-6 w-[90px]">Hide Unsel</Btn>
              </div>
              <div className="grid grid-cols-2 gap-1">
                <Btn size="h-6" pad="pl-[14px]" icon={<Svg size={20}><CubeFaces top="#8bd18d" left="#2d8f46" right="#3aa657" stroke="#2c6a3c" w={1} /><path d="M11 9 22 21M21 9 12 21" stroke="#cf4a22" strokeWidth="3" /></Svg>}>Delete Selected Shells</Btn>
                <Btn size="h-6" pad="pl-[14px]" icon={<Svg size={20}><CubeFaces top="#8bd18d" left="#3aa657" right="#2d8f46" stroke="#2c6a3c" w={1} /><path d="M9 14H17V10.500L23 15.500 17 20.500V17.500H9Z" fill="#e9f8e9" stroke="#2c8a44" /></Svg>}>Separate Selected Shells</Btn>
                <Btn size="h-6" pad="pl-[14px]" icon={<Svg size={20}><g stroke="#5a6a80"><path d="M2 3 4 1.500H11V9L9 11H2Z" fill="#b6d1f2" /><path d="M13 3 15 1.500H22V9L20 11H13Z" fill="#35944a" /><path d="M2 15 4 13.500H11V21L9 23H2Z" fill="#f5ce35" /><path d="M13 15 15 13.500H22V21L20 23H13Z" fill="#a9b4e3" /></g><path d="M3 4H8V10H3ZM14 16H19V22H14Z" fill="#dfeafb" /></Svg>}>Shells to Parts</Btn>
                <Btn size="h-6" pad="pl-[14px]" icon={<Svg size={20}><path d="M1 12 7 8 12 9V6L17 2 23 3V11L17 15 12 16V19L7 23 1 20Z" fill="#7683cd" stroke="#454f8f" /><path d="M1 12 7 14 12 9M7 14V23M12 6 17 7 23 3M17 7V15" stroke="#454f8f" /></Svg>}>Unify</Btn>
              </div>
            </div>
          </section>

          <footer className="mt-[7px] flex justify-end pr-[10px]">
            <button className={`${btn} mr-[6px] h-[25px] w-[150px] pl-[14px]`}>
              <span className="absolute left-1 top-px"><Svg size={21}><path d="M1 8H11V2.500L23 12 11 21.500V16H1L4 12Z" fill="#4ac535" stroke="#246c1c" strokeWidth="1.300" strokeLinejoin="round" /></Svg></span>
              Follow Advice
            </button>
            <Btn size="mr-2 h-[25px] w-[58px]">Close</Btn>
            <Btn size="h-[25px] w-[58px]">Help</Btn>
          </footer>
        </div>
        <svg width="12" height="12" viewBox="0 0 12 12" className="absolute bottom-0 right-0" aria-hidden="true"><path d="M1 12 12 1M5 12 12 5M9 12 12 9" stroke="#8a8a8a" /></svg>
      </div>
    </div>
  );
}

/* ---------- window menu ---------- */

const sysItems = [
  ["Восстановить", <path d="M1 4.500H6.500V9.500H1ZM3 4V1.500H9V7H7" stroke="#aaa" strokeWidth="1.500" />],
  ["Переместить", null],
  ["Размер", null],
  ["Свернуть", <path d="M1 8H9" stroke="#aaa" strokeWidth="2" />],
  ["Развернуть", <path d="M1.500 2.500H8.500V8H1.500Z" stroke="#aaa" strokeWidth="1.800" />],
];

function SystemMenu() {
  return (
    <div role="menu" className="absolute bottom-[2px] left-0 w-[191px] border border-[#8d959d] bg-[#f0f0f0] px-[2px] pb-px pt-[3px]">
      <div>
        {sysItems.map(([t, icon]) => (
          <button key={t} role="menuitem" disabled className="flex h-[22px] w-full items-center text-[#7c7c7c]">
            <span className="flex h-full w-[27px] items-center border-r border-[#e0e0e0] pl-[7px]"><svg width="10" height="10" viewBox="0 0 10 10" fill="none">{icon}</svg></span>
            <span className="pl-1">{t}</span>
          </button>
        ))}
        <div className="ml-[28px] pb-[3px] pt-1"><div className="h-px bg-[#d8d8d8]" /></div>
        <button role="menuitem" className="flex h-[22px] w-full items-center">
          <span className="flex h-full w-[27px] items-center border-r border-[#e0e0e0] pl-2"><CloseX /></span>
          <span className="pl-1">Закрыть</span>
          <span className="ml-auto pr-[17px]">Alt+F4</span>
        </button>
      </div>
    </div>
  );
}

export default function App() {
  return (
    <div className="relative flex h-screen min-h-[640px] flex-col overflow-hidden bg-white font-['DejaVu_Sans_Condensed','Noto_Sans',sans-serif] text-[11px] leading-[14px] text-[#111]">
      <TitleBar />
      <MenuBar />
      <div className="flex min-h-0 flex-1">
        <main className="flex min-w-0 flex-1 flex-col">
          <ToolBar />
          <RingView />
          <Ruler />
        </main>
        <SidePanels />
      </div>
      <div className="h-[18px] shrink-0 bg-[#2d95fa]" />
      <div className="h-[2px] shrink-0 bg-[#20344c]" />
      <FixWizard />
      <SystemMenu />
    </div>
  );
}
